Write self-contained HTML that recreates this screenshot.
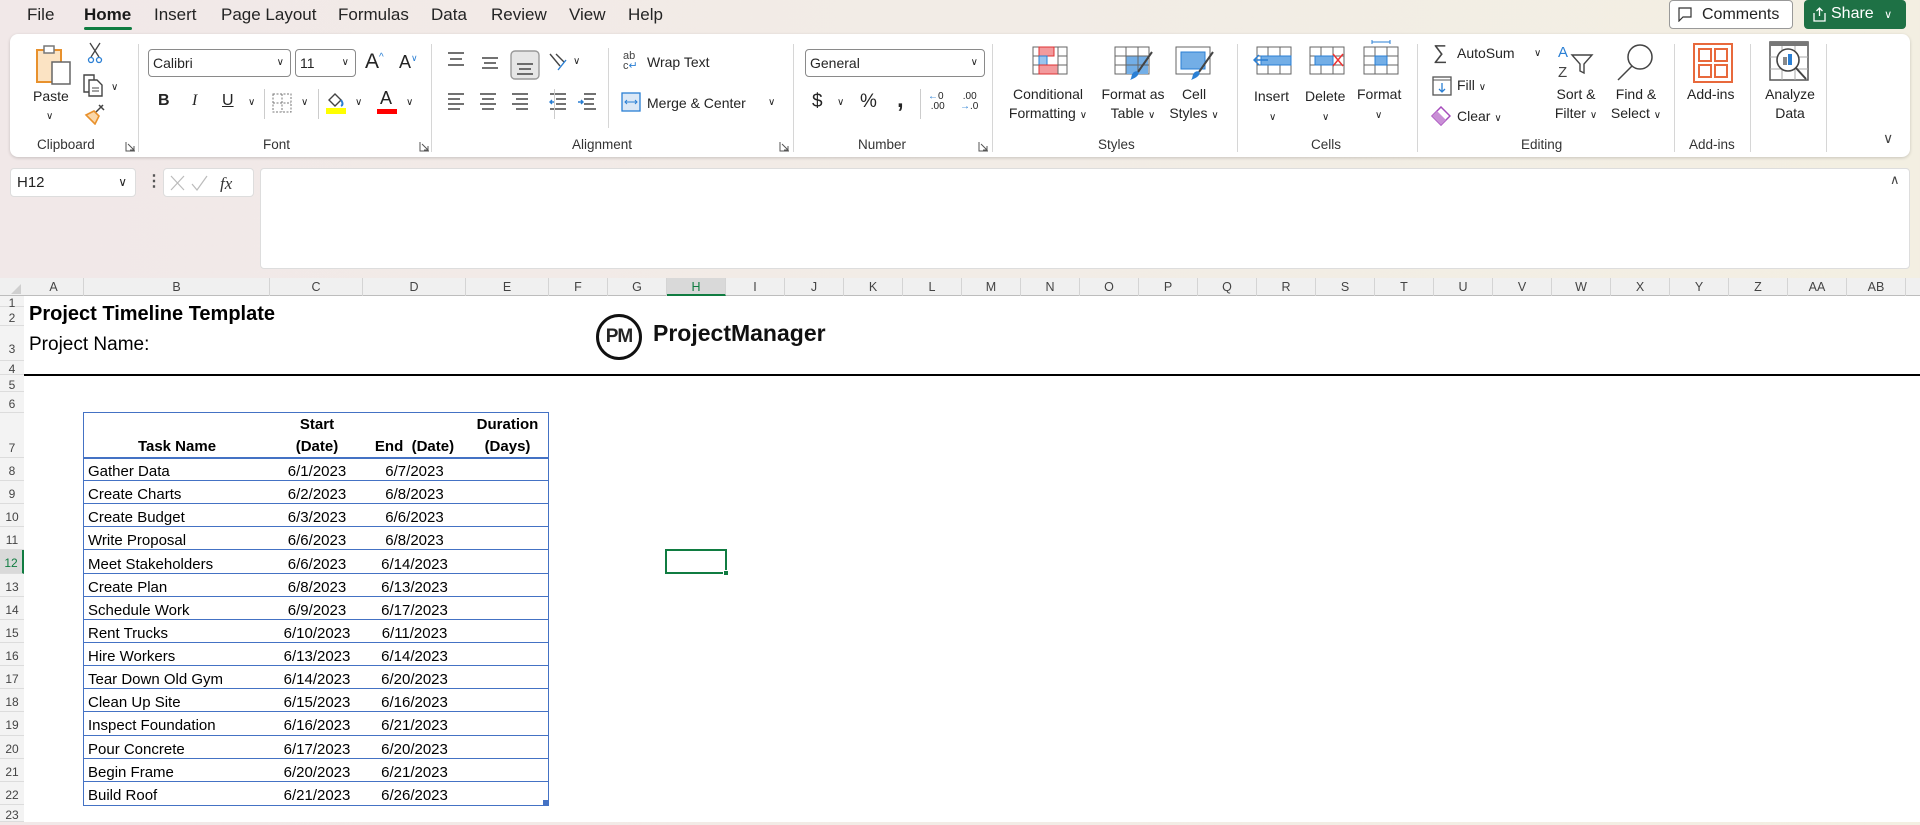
<!DOCTYPE html>
<html><head><meta charset="utf-8"><style>
*{box-sizing:border-box;margin:0;padding:0}
body{width:1920px;height:822px;overflow:hidden;position:relative;font-family:"Liberation Sans",sans-serif;color:#242424;background:linear-gradient(90deg,#f1e8e8 0%,#f2ece6 50%,#f3efe2 100%)}
.t{position:absolute;white-space:nowrap}
.tab{position:absolute;top:5px;font-size:17px;color:#242424}
.rib{position:absolute;left:10px;top:34px;width:1900px;height:123px;background:#fff;border-radius:8px;box-shadow:0 1px 3px rgba(0,0,0,.18)}
.sep{position:absolute;top:44px;width:1px;height:108px;background:#d6d6d6}
.gl{position:absolute;top:137px;font-size:13.5px;color:#333;white-space:nowrap}
.rt{position:absolute;font-size:14px;color:#242424;white-space:nowrap;text-align:center;line-height:19px}
.chev{font-size:10px}
svg{position:absolute}
.box{position:absolute;border:1px solid #8a8a8a;border-radius:4px;background:#fff;font-size:14px;padding-left:4px;line-height:26px}
.colh{position:absolute;top:278px;height:18px;font-size:12.5px;color:#444;text-align:center;line-height:18px;border-right:1px solid #d4d4d4}
.rowh{position:absolute;left:0;width:24px;font-size:12px;color:#444;text-align:center;border-bottom:1px solid #dcdcdc;background:#f3f3f3}
.c{position:absolute;font-size:15px;color:#000;white-space:nowrap}
</style></head><body>
<!-- tabs -->
<div class="tab" style="left:27px">File</div>
<div class="tab" style="left:84px;font-weight:bold;color:#1a1a1a">Home</div>
<div style="position:absolute;left:84px;top:27px;width:48px;height:3px;background:#107c41;border-radius:2px"></div>
<div class="tab" style="left:154px">Insert</div>
<div class="tab" style="left:221px">Page Layout</div>
<div class="tab" style="left:338px">Formulas</div>
<div class="tab" style="left:431px">Data</div>
<div class="tab" style="left:491px">Review</div>
<div class="tab" style="left:569px">View</div>
<div class="tab" style="left:628px">Help</div>
<div style="position:absolute;left:1669px;top:0;width:124px;height:29px;border:1px solid #999;border-radius:4px;background:#fff;font-size:16px;line-height:27px;padding-left:32px">Comments</div>
<svg style="left:1678px;top:7px" width="14" height="15" viewBox="0 0 14 15"><path d="M1 1h12v9H5l-4 4z" fill="none" stroke="#333" stroke-width="1.2"/></svg>
<div style="position:absolute;left:1804px;top:0;width:102px;height:29px;background:#1e7145;border-radius:4px;color:#fff;font-size:16px;line-height:28px;padding-left:27px">Share <span style="font-size:11px;margin-left:6px">&#8744;</span></div>
<svg style="left:1812px;top:6px" width="15" height="16" viewBox="0 0 15 16"><path d="M2 7v8h11V7M7.5 10V2M4.5 5l3-3 3 3" fill="none" stroke="#fff" stroke-width="1.3"/></svg>

<div class="rib"></div>
<!-- Clipboard -->
<svg style="left:35px;top:44px" width="38" height="42" viewBox="0 0 38 42"><rect x="2" y="6" width="24" height="32" fill="#fbe3c3" stroke="#e8912d" stroke-width="2"/><rect x="9" y="2" width="10" height="7" fill="#fff" stroke="#777" stroke-width="1.5"/><rect x="17" y="18" width="18" height="22" fill="#fff" stroke="#666" stroke-width="1.5"/></svg>
<div class="rt" style="left:33px;top:87px">Paste</div>
<div class="rt chev" style="left:46px;top:107px">&#8744;</div>
<svg style="left:87px;top:42px" width="16" height="22" viewBox="0 0 16 22"><path d="M3 1l9 14M13 1L4 15" stroke="#444" stroke-width="1.3" fill="none"/><circle cx="4" cy="18" r="2.5" fill="none" stroke="#2a7fd4" stroke-width="1.3"/><circle cx="12" cy="18" r="2.5" fill="none" stroke="#2a7fd4" stroke-width="1.3"/></svg>
<svg style="left:83px;top:73px" width="22" height="24" viewBox="0 0 22 24"><path d="M1 2h10v17H1z" fill="none" stroke="#444" stroke-width="1.4"/><path d="M6 7h8l5 5v11H6z" fill="#fff" stroke="#444" stroke-width="1.4"/><path d="M9 15h7M9 18h7" stroke="#444"/></svg>
<div class="rt chev" style="left:111px;top:78px">&#8744;</div>
<svg style="left:84px;top:103px" width="22" height="22" viewBox="0 0 22 22"><path d="M12 9l7-7M15 2l5 5" stroke="#444" stroke-width="1.5"/><path d="M2 12l8-4 5 5-4 8z" fill="#fbd7a8" stroke="#e8912d" stroke-width="1.6"/></svg>
<div class="gl" style="left:37px">Clipboard</div>
<svg style="left:125px;top:141px" width="11" height="11"><path d="M1 1v9h9M3 3l6 6M5 9h4V5" fill="none" stroke="#555"/></svg>
<div class="sep" style="left:138px"></div>
<!-- Font -->
<div class="box" style="left:148px;top:49px;width:143px;height:28px">Calibri<span style="position:absolute;right:6px;font-size:10px">&#8744;</span></div>
<div class="box" style="left:295px;top:49px;width:61px;height:28px">11<span style="position:absolute;right:6px;font-size:10px">&#8744;</span></div>
<div class="t" style="left:365px;top:50px;font-size:21px">A<sup style="font-size:10px;color:#2a7fd4">^</sup></div>
<div class="t" style="left:399px;top:52px;font-size:18px">A<sup style="font-size:9px;color:#2a7fd4">&#8744;</sup></div>
<div class="t" style="left:158px;top:92px;font-size:16px;font-weight:bold">B</div>
<div class="t" style="left:192px;top:92px;font-size:16px;font-style:italic;font-family:'Liberation Serif',serif">I</div>
<div class="t" style="left:222px;top:92px;font-size:16px;text-decoration:underline">U</div>
<div class="t chev" style="left:248px;top:97px">&#8744;</div>
<div style="position:absolute;left:264px;top:89px;width:1px;height:30px;background:#ccc"></div>
<svg style="left:272px;top:93px" width="20" height="20"><rect x="1" y="1" width="18" height="18" fill="none" stroke="#777" stroke-dasharray="2 1.5"/><path d="M10 1v18M1 10h18" stroke="#777" stroke-dasharray="2 1.5"/></svg>
<div class="t chev" style="left:301px;top:97px">&#8744;</div>
<div style="position:absolute;left:318px;top:89px;width:1px;height:30px;background:#ccc"></div>
<svg style="left:325px;top:90px" width="22" height="24"><path d="M4 10l6-6 6 6-6 6z" fill="#fff" stroke="#444" stroke-width="1.4"/><path d="M16 10c2 3 2 5 0 6" stroke="#2a7fd4" stroke-width="2" fill="none"/><rect x="1" y="18" width="20" height="6" fill="#ffff00"/></svg>
<div class="t chev" style="left:355px;top:97px">&#8744;</div>
<div class="t" style="left:380px;top:88px;font-size:18px">A</div>
<div style="position:absolute;left:377px;top:109px;width:20px;height:5px;background:#f00"></div>
<div class="t chev" style="left:406px;top:97px">&#8744;</div>
<div class="gl" style="left:263px">Font</div>
<svg style="left:419px;top:141px" width="11" height="11"><path d="M1 1v9h9M3 3l6 6M5 9h4V5" fill="none" stroke="#555"/></svg>
<div class="sep" style="left:431px"></div>
<!-- Alignment -->
<svg style="left:446px;top:50px" width="140" height="30"><g stroke="#444" stroke-width="1.4"><path d="M2 3h16M4 9h12M2 15h16"/><path d="M36 8h16M38 13h12M36 18h16"/><rect x="65" y="1" width="28" height="28" rx="4" fill="#e6e6e6" stroke="#999"/><path d="M71 14h16M73 19h12M71 24h16"/><path d="M104 4l10 12M110 4l8 8" stroke="#444"/><path d="M112 20l8-10" stroke="#2a7fd4"/></g></svg>
<div class="t chev" style="left:573px;top:56px">&#8744;</div>
<svg style="left:446px;top:92px" width="150" height="20"><g stroke="#444" stroke-width="1.4"><path d="M2 2h16M2 7h12M2 12h16M2 17h12"/><path d="M34 2h16M36 7h12M34 12h16M36 17h12"/><path d="M66 2h16M70 7h12M66 12h16M70 17h12"/><path d="M104 2h16M110 7h10M110 12h10M104 17h16"/><path d="M104 10h5M106 8l-2 2 2 2" stroke="#2a7fd4"/><path d="M138 2h16M138 7h10M138 12h10M138 17h16"/><path d="M132 10h5M135 8l2 2-2 2" stroke="#2a7fd4"/></g></svg>
<div style="position:absolute;left:554px;top:89px;width:1px;height:30px;background:#ccc"></div>
<div class="t" style="left:623px;top:51px;font-size:11px;line-height:10px;color:#444">ab<br>c<span style="color:#2a7fd4">&#8629;</span></div>
<div class="rt" style="left:647px;top:53px">Wrap Text</div>
<svg style="left:621px;top:92px" width="20" height="20"><rect x="1" y="1" width="18" height="18" fill="#dbe8f6" stroke="#2a7fd4" stroke-width="1.3"/><path d="M4 10h12M6 8l-2 2 2 2M14 8l2 2-2 2" stroke="#2a7fd4" fill="none"/></svg>
<div class="rt" style="left:647px;top:94px">Merge &amp; Center</div>
<div class="t chev" style="left:768px;top:97px">&#8744;</div>
<div class="sep" style="left:608px;height:80px;top:48px"></div>
<div class="gl" style="left:572px">Alignment</div>
<svg style="left:779px;top:141px" width="11" height="11"><path d="M1 1v9h9M3 3l6 6M5 9h4V5" fill="none" stroke="#555"/></svg>
<div class="sep" style="left:793px"></div>
<!-- Number -->
<div class="box" style="left:805px;top:49px;width:180px;height:28px">General<span style="position:absolute;right:6px;font-size:10px">&#8744;</span></div>
<div class="t" style="left:812px;top:91px;font-size:19px">$</div>
<div class="t chev" style="left:837px;top:97px">&#8744;</div>
<div class="t" style="left:860px;top:91px;font-size:19px">%</div>
<div class="t" style="left:897px;top:86px;font-size:24px;font-weight:bold">,</div>
<div style="position:absolute;left:920px;top:89px;width:1px;height:30px;background:#ccc"></div>
<div class="t" style="left:928px;top:92px;font-size:10px;line-height:10px"><span style="color:#2a7fd4">&#8592;</span>0<br>&nbsp;.00</div>
<div class="t" style="left:960px;top:92px;font-size:10px;line-height:10px">&nbsp;.00<br><span style="color:#2a7fd4">&#8594;</span>.0</div>
<div class="gl" style="left:858px">Number</div>
<svg style="left:978px;top:141px" width="11" height="11"><path d="M1 1v9h9M3 3l6 6M5 9h4V5" fill="none" stroke="#555"/></svg>
<div class="sep" style="left:992px"></div>
<!-- Styles -->
<svg style="left:1032px;top:46px" width="36" height="30"><rect x="1" y="1" width="34" height="27" fill="#fff" stroke="#666"/><rect x="7" y="1" width="15" height="9" fill="#f39a9d" stroke="#d33"/><rect x="7" y="10" width="8" height="9" fill="#9ac4ee" stroke="#2a7fd4"/><rect x="7" y="19" width="19" height="9" fill="#f39a9d" stroke="#d33"/><path d="M26 1v27M1 10h6M1 19h6M26 10h9M26 19h9" stroke="#666"/></svg>
<svg style="left:1114px;top:46px" width="40" height="36"><rect x="1" y="1" width="34" height="27" fill="#fff" stroke="#666"/><rect x="12" y="10" width="22" height="18" fill="#73aee6"/><path d="M12 1v27M24 1v27M1 10h34M1 19h34" stroke="#666"/><path d="M38 6L24 26" stroke="#444" stroke-width="2"/><path d="M20 26c3-2 6 0 4 3s-6 4-8 5c2-2 1-6 4-8z" fill="#2a7fd4"/></svg>
<svg style="left:1175px;top:46px" width="40" height="36"><rect x="1" y="1" width="34" height="27" fill="#fff" stroke="#666"/><rect x="6" y="6" width="24" height="17" fill="#73aee6" stroke="#2a7fd4"/><path d="M38 6L24 26" stroke="#444" stroke-width="2"/><path d="M20 26c3-2 6 0 4 3s-6 4-8 5c2-2 1-6 4-8z" fill="#2a7fd4"/></svg>
<div class="rt" style="left:1005px;top:85px;width:86px">Conditional<br>Formatting <span class="chev">&#8744;</span></div>
<div class="rt" style="left:1098px;top:85px;width:70px">Format as<br>Table <span class="chev">&#8744;</span></div>
<div class="rt" style="left:1168px;top:85px;width:52px">Cell<br>Styles <span class="chev">&#8744;</span></div>
<div class="gl" style="left:1098px">Styles</div>
<div class="sep" style="left:1237px"></div>
<!-- Cells -->
<svg style="left:1253px;top:46px" width="40" height="30"><rect x="4" y="1" width="34" height="27" fill="#fff" stroke="#666"/><path d="M15 1v27M27 1v27M4 10h34M4 19h34" stroke="#666"/><rect x="8" y="10" width="30" height="9" fill="#73aee6" stroke="#2a7fd4"/><path d="M1 14h14M6 9l-5 5 5 5" fill="none" stroke="#2a7fd4" stroke-width="1.5"/></svg>
<svg style="left:1309px;top:46px" width="36" height="30"><rect x="1" y="1" width="34" height="27" fill="#fff" stroke="#666"/><path d="M12 1v27M24 1v27M1 10h34M1 19h34" stroke="#666"/><rect x="6" y="10" width="18" height="9" fill="#73aee6" stroke="#2a7fd4"/><path d="M24 8l10 12M34 8L24 20" stroke="#e33" stroke-width="1.5"/></svg>
<svg style="left:1363px;top:40px" width="36" height="36"><path d="M9 2h18M9 0v4M27 0v4" stroke="#2a7fd4"/><rect x="1" y="7" width="34" height="27" fill="#fff" stroke="#666"/><path d="M12 7v27M24 7v27M1 16h34M1 25h34" stroke="#666"/><rect x="12" y="16" width="12" height="9" fill="#73aee6" stroke="#2a7fd4"/></svg>
<div class="rt" style="left:1254px;top:87px">Insert</div>
<div class="rt" style="left:1305px;top:87px">Delete</div>
<div class="rt" style="left:1357px;top:85px">Format</div>
<div class="rt chev" style="left:1269px;top:108px">&#8744;</div>
<div class="rt chev" style="left:1322px;top:108px">&#8744;</div>
<div class="rt chev" style="left:1375px;top:106px">&#8744;</div>
<div class="gl" style="left:1311px">Cells</div>
<div class="sep" style="left:1417px"></div>
<!-- Editing -->
<div class="t" style="left:1433px;top:42px;font-size:20px;color:#444">&#8721;</div>
<div class="rt" style="left:1457px;top:44px">AutoSum</div>
<div class="t chev" style="left:1534px;top:48px">&#8744;</div>
<svg style="left:1432px;top:76px" width="20" height="20"><rect x="1" y="1" width="18" height="18" fill="#fff" stroke="#555" stroke-width="1.3"/><path d="M1 4h18" stroke="#555"/><path d="M10 7v9M7 13l3 3 3-3" fill="none" stroke="#2a7fd4" stroke-width="1.3"/></svg>
<div class="rt" style="left:1457px;top:76px">Fill <span class="chev">&#8744;</span></div>
<svg style="left:1431px;top:106px" width="20" height="20"><path d="M10 1l9 9-9 9-9-9z" fill="#fff" stroke="#a64cbc" stroke-width="1.5"/><path d="M1 10l5-5 9 9-5 5z" fill="#c98fd6"/></svg>
<div class="rt" style="left:1457px;top:107px">Clear <span class="chev">&#8744;</span></div>
<svg style="left:1556px;top:43px" width="40" height="36"><text x="2" y="14" font-size="15" fill="#2a7fd4" font-family="Liberation Sans">A</text><text x="2" y="34" font-size="15" fill="#444" font-family="Liberation Sans">Z</text><path d="M16 12h20l-8 9v9l-4-2v-7z" fill="none" stroke="#444" stroke-width="1.4"/></svg>
<svg style="left:1615px;top:42px" width="40" height="40"><circle cx="25" cy="15" r="12" fill="none" stroke="#444" stroke-width="1.5"/><path d="M17 24L3 38" stroke="#444" stroke-width="1.5"/></svg>
<div class="rt" style="left:1550px;top:85px;width:52px">Sort &amp;<br>Filter <span class="chev">&#8744;</span></div>
<div class="rt" style="left:1607px;top:85px;width:58px">Find &amp;<br>Select <span class="chev">&#8744;</span></div>
<div class="gl" style="left:1521px">Editing</div>
<div class="sep" style="left:1674px"></div>
<!-- Add-ins -->
<svg style="left:1693px;top:43px" width="40" height="40"><rect x="1" y="1" width="38" height="38" fill="#fff" stroke="#e8693c" stroke-width="2"/><rect x="6" y="6" width="12" height="12" fill="none" stroke="#e8693c" stroke-width="2"/><rect x="22" y="6" width="12" height="12" fill="none" stroke="#e8693c" stroke-width="2"/><rect x="6" y="22" width="12" height="12" fill="none" stroke="#e8693c" stroke-width="2"/><rect x="22" y="22" width="12" height="12" fill="none" stroke="#e8693c" stroke-width="2"/></svg>
<div class="rt" style="left:1687px;top:85px">Add-ins</div>
<div class="gl" style="left:1689px">Add-ins</div>
<div class="sep" style="left:1750px"></div>
<svg style="left:1769px;top:41px" width="42" height="42"><rect x="1" y="1" width="38" height="38" fill="#fff" stroke="#555" stroke-width="1.5"/><rect x="1" y="1" width="38" height="4" fill="#777"/><path d="M13 5v34M26 5v34M1 16h38M1 28h38" stroke="#aaa"/><circle cx="19" cy="19" r="11" fill="#fff" stroke="#444" stroke-width="1.6"/><rect x="14" y="16" width="4" height="8" fill="#888"/><rect x="19" y="13" width="4" height="11" fill="#2a7fd4"/><path d="M27 27l10 11" stroke="#444" stroke-width="2"/></svg>
<div class="rt" style="left:1762px;top:85px;width:56px">Analyze<br>Data</div>
<div class="sep" style="left:1826px"></div>
<div class="t" style="left:1883px;top:130px;font-size:14px;color:#444">&#8744;</div>

<!-- formula bar -->
<div style="position:absolute;left:10px;top:168px;width:126px;height:29px;background:#fff;border:1px solid #ddd;border-radius:4px;font-size:15px;line-height:27px;padding-left:6px">H12<span style="position:absolute;right:8px;font-size:12px">&#8744;</span></div>
<div class="t" style="left:146px;top:171px;font-size:16px;font-weight:bold;color:#555">&#8942;</div>
<div style="position:absolute;left:163px;top:168px;width:91px;height:29px;background:#fff;border:1px solid #ddd;border-radius:4px"></div>
<svg style="left:170px;top:174px" width="80" height="18"><path d="M1 2l13 14M14 2L1 16" stroke="#bbb" stroke-width="1.2"/><path d="M22 10l5 6 10-14" fill="none" stroke="#bbb" stroke-width="1.2"/><text x="50" y="15" font-size="17" font-style="italic" font-family="Liberation Serif" fill="#333">fx</text></svg>
<div style="position:absolute;left:260px;top:168px;width:1650px;height:101px;background:#fff;border:1px solid #ddd;border-radius:4px"></div>
<div class="t" style="left:1890px;top:172px;font-size:13px;color:#444">&#8743;</div>

<!-- sheet -->
<div style="position:absolute;left:0;top:278px;width:1920px;height:544px;background:#fff"></div>
<div style="position:absolute;left:0;top:278px;width:1920px;height:18px;background:#f0f0f0;border-bottom:1px solid #bdbdbd"></div>
<div style="position:absolute;left:0;top:296px;width:24px;height:526px;background:#f3f3f3;border-right:1px solid #bdbdbd"></div>
<svg style="left:10px;top:283px" width="12" height="12"><path d="M11 1v10H1z" fill="#cfcfcf"/></svg>
<div class="colh" style="left:24px;width:60px">A</div>
<div class="colh" style="left:84px;width:186px">B</div>
<div class="colh" style="left:270px;width:93px">C</div>
<div class="colh" style="left:363px;width:103px">D</div>
<div class="colh" style="left:466px;width:83px">E</div>
<div class="colh" style="left:549px;width:59px">F</div>
<div class="colh" style="left:608px;width:59px">G</div>
<div class="colh" style="left:667px;width:59px;background:#d9d9d9;color:#107c41;border-bottom:2px solid #107c41">H</div>
<div class="colh" style="left:726px;width:59px">I</div>
<div class="colh" style="left:785px;width:59px">J</div>
<div class="colh" style="left:844px;width:59px">K</div>
<div class="colh" style="left:903px;width:59px">L</div>
<div class="colh" style="left:962px;width:59px">M</div>
<div class="colh" style="left:1021px;width:59px">N</div>
<div class="colh" style="left:1080px;width:59px">O</div>
<div class="colh" style="left:1139px;width:59px">P</div>
<div class="colh" style="left:1198px;width:59px">Q</div>
<div class="colh" style="left:1257px;width:59px">R</div>
<div class="colh" style="left:1316px;width:59px">S</div>
<div class="colh" style="left:1375px;width:59px">T</div>
<div class="colh" style="left:1434px;width:59px">U</div>
<div class="colh" style="left:1493px;width:59px">V</div>
<div class="colh" style="left:1552px;width:59px">W</div>
<div class="colh" style="left:1611px;width:59px">X</div>
<div class="colh" style="left:1670px;width:59px">Y</div>
<div class="colh" style="left:1729px;width:59px">Z</div>
<div class="colh" style="left:1788px;width:59px">AA</div>
<div class="colh" style="left:1847px;width:59px">AB</div>

<div class="rowh" style="top:296px;height:11px;line-height:14px">1</div>
<div class="rowh" style="top:307px;height:19px;line-height:22px">2</div>
<div class="rowh" style="top:326px;height:35px;line-height:46px">3</div>
<div class="rowh" style="top:361px;height:14px;line-height:17px">4</div>
<div class="rowh" style="top:375px;height:17px;line-height:20px">5</div>
<div class="rowh" style="top:392px;height:21px;line-height:24px">6</div>
<div class="rowh" style="top:413px;height:45px;line-height:70px">7</div>
<div class="rowh" style="top:458px;height:23px;line-height:26px">8</div>
<div class="rowh" style="top:481px;height:23px;line-height:26px">9</div>
<div class="rowh" style="top:504px;height:23px;line-height:26px">10</div>
<div class="rowh" style="top:527px;height:23px;line-height:26px">11</div>
<div class="rowh" style="top:550px;height:24px;line-height:27px;background:#d9d9d9;color:#107c41;border-right:2px solid #107c41">12</div>
<div class="rowh" style="top:574px;height:23px;line-height:26px">13</div>
<div class="rowh" style="top:597px;height:23px;line-height:26px">14</div>
<div class="rowh" style="top:620px;height:23px;line-height:26px">15</div>
<div class="rowh" style="top:643px;height:23px;line-height:26px">16</div>
<div class="rowh" style="top:666px;height:23px;line-height:26px">17</div>
<div class="rowh" style="top:689px;height:23px;line-height:26px">18</div>
<div class="rowh" style="top:712px;height:24px;line-height:27px">19</div>
<div class="rowh" style="top:736px;height:23px;line-height:26px">20</div>
<div class="rowh" style="top:759px;height:23px;line-height:26px">21</div>
<div class="rowh" style="top:782px;height:23px;line-height:26px">22</div>
<div class="rowh" style="top:805px;height:17px;line-height:20px">23</div>

<!-- title -->
<div class="c" style="left:29px;top:303px;font-size:20px;font-weight:bold">Project Timeline Template</div>
<div class="c" style="left:29px;top:334px;font-size:19px">Project Name:</div>
<div style="position:absolute;left:24px;top:374px;width:1896px;height:2px;background:#000"></div>
<div style="position:absolute;left:596px;top:314px;width:46px;height:46px;border:3.5px solid #111;border-radius:50%;font-size:19px;font-weight:bold;text-align:center;line-height:39px;letter-spacing:-1px">PM</div>
<div class="c" style="left:653px;top:320px;font-size:23px;font-weight:bold;color:#111">ProjectManager</div>

<!-- table -->
<div style="position:absolute;left:83px;top:412px;width:466px;height:394px;border:1.5px solid #4472c4"></div>
<div class="c" style="left:271px;width:92px;text-align:center;top:416px;font-weight:bold">Start</div>
<div class="c" style="left:466px;width:83px;text-align:center;top:416px;font-weight:bold">Duration</div>
<div class="c" style="left:84px;width:186px;text-align:center;top:438px;font-weight:bold">Task Name</div>
<div class="c" style="left:271px;width:92px;text-align:center;top:438px;font-weight:bold">(Date)</div>
<div class="c" style="left:363px;width:103px;text-align:center;top:438px;font-weight:bold">End&nbsp; (Date)</div>
<div class="c" style="left:466px;width:83px;text-align:center;top:438px;font-weight:bold">(Days)</div>

<div id="rows"></div>
<div style="position:absolute;left:83px;top:457px;width:466px;height:1.5px;background:#4472c4"></div>
<div style="position:absolute;left:83px;top:480px;width:466px;height:1px;background:#4472c4"></div>
<div style="position:absolute;left:83px;top:503px;width:466px;height:1px;background:#4472c4"></div>
<div style="position:absolute;left:83px;top:526px;width:466px;height:1px;background:#4472c4"></div>
<div style="position:absolute;left:83px;top:549px;width:466px;height:1px;background:#4472c4"></div>
<div style="position:absolute;left:83px;top:573px;width:466px;height:1px;background:#4472c4"></div>
<div style="position:absolute;left:83px;top:596px;width:466px;height:1px;background:#4472c4"></div>
<div style="position:absolute;left:83px;top:619px;width:466px;height:1px;background:#4472c4"></div>
<div style="position:absolute;left:83px;top:642px;width:466px;height:1px;background:#4472c4"></div>
<div style="position:absolute;left:83px;top:665px;width:466px;height:1px;background:#4472c4"></div>
<div style="position:absolute;left:83px;top:688px;width:466px;height:1px;background:#4472c4"></div>
<div style="position:absolute;left:83px;top:711px;width:466px;height:1px;background:#4472c4"></div>
<div style="position:absolute;left:83px;top:735px;width:466px;height:1px;background:#4472c4"></div>
<div style="position:absolute;left:83px;top:758px;width:466px;height:1px;background:#4472c4"></div>
<div style="position:absolute;left:83px;top:781px;width:466px;height:1px;background:#4472c4"></div>
<div style="position:absolute;left:543px;top:800px;width:5px;height:5px;background:#4472c4"></div>

<div style="position:absolute;left:88px;top:460px;width:200px;line-height:23.13px;font-size:15px;color:#000">Gather Data<br>Create Charts<br>Create Budget<br>Write Proposal<br>Meet Stakeholders<br>Create Plan<br>Schedule Work<br>Rent Trucks<br>Hire Workers<br>Tear Down Old Gym<br>Clean Up Site<br>Inspect Foundation<br>Pour Concrete<br>Begin Frame<br>Build Roof</div>
<div style="position:absolute;left:271px;top:460px;width:92px;text-align:center;line-height:23.13px;font-size:15px;color:#000">6/1/2023<br>6/2/2023<br>6/3/2023<br>6/6/2023<br>6/6/2023<br>6/8/2023<br>6/9/2023<br>6/10/2023<br>6/13/2023<br>6/14/2023<br>6/15/2023<br>6/16/2023<br>6/17/2023<br>6/20/2023<br>6/21/2023</div>
<div style="position:absolute;left:363px;top:460px;width:103px;text-align:center;line-height:23.13px;font-size:15px;color:#000">6/7/2023<br>6/8/2023<br>6/6/2023<br>6/8/2023<br>6/14/2023<br>6/13/2023<br>6/17/2023<br>6/11/2023<br>6/14/2023<br>6/20/2023<br>6/16/2023<br>6/21/2023<br>6/20/2023<br>6/21/2023<br>6/26/2023</div>

<!-- selection -->
<div style="position:absolute;left:665px;top:549px;width:62px;height:25px;border:2px solid #107c41"></div>
<div style="position:absolute;left:723px;top:570px;width:6px;height:6px;background:#107c41;border:1px solid #fff"></div>
</body></html>
